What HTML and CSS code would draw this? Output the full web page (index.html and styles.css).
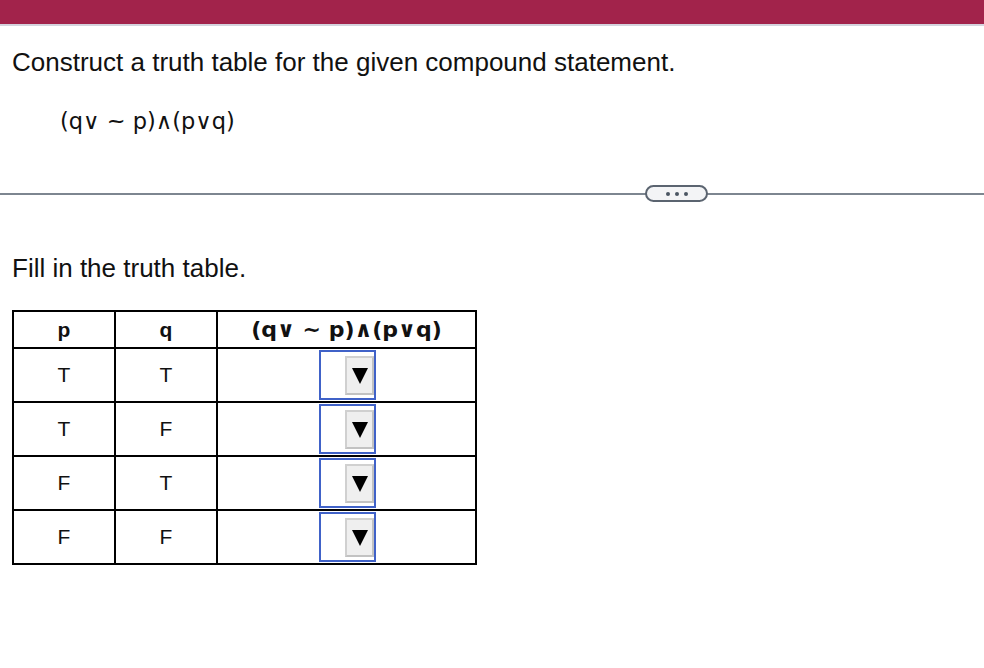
FILE: index.html
```html
<!DOCTYPE html>
<html>
<head>
<meta charset="utf-8">
<link rel="stylesheet" href="styles.css">
</head>
<body>
<div class="topbar"></div>
<div class="question">
  <p class="prompt">Construct a truth table for the given compound statement.</p>
  <p class="formula">(q∨ ~ p)∧(p∨q)</p>
</div>
<div class="divider">
  <span class="pill"><i></i><i></i><i></i></span>
</div>
<div class="answer">
  <p class="fill">Fill in the truth table.</p>
  <table class="truth">
    <tr class="head"><th class="c1">p</th><th class="c2">q</th><th class="c3"><span class="hformula">(q∨ ~ p)∧(p∨q)</span></th></tr>
    <tr><td>T</td><td>T</td><td><span class="dd"><span class="btn"></span></span></td></tr>
    <tr><td>T</td><td>F</td><td><span class="dd"><span class="btn"></span></span></td></tr>
    <tr><td>F</td><td>T</td><td><span class="dd"><span class="btn"></span></span></td></tr>
    <tr><td>F</td><td>F</td><td><span class="dd"><span class="btn"></span></span></td></tr>
  </table>
</div>
</body>
</html>
```

FILE: styles.css
```css
html, body {
  margin: 0;
  padding: 0;
  background: #ffffff;
  font-family: "Liberation Sans", Arial, sans-serif;
  color: #111;
}
.topbar {
  height: 24px;
  background: #a2234b;
  border-bottom: 2px solid #d4d3dd;
}
.question {
  padding: 0 12px;
}
.prompt {
  margin: 21px 0 0 0;
  font-size: 26px;
  line-height: 30px;
}
.formula {
  margin: 29px 0 0 48px;
  font-family: "DejaVu Sans", Verdana, sans-serif;
  font-size: 22.5px;
  line-height: 30px;
}
.divider {
  margin-top: 57px;
  height: 2px;
  background: #7d8690;
  position: relative;
}
.pill {
  position: absolute;
  left: 645px;
  top: -8px;
  width: 59px;
  height: 13px;
  border: 2px solid #5b6470;
  border-radius: 9px;
  background: #f3f4f6;
  display: flex;
  align-items: center;
  justify-content: center;
  gap: 5px;
}
.pill i {
  width: 4px;
  height: 4px;
  border-radius: 50%;
  background: #4b5563;
}
.answer {
  padding: 0 12px;
}
.fill {
  margin: 58px 0 0 0;
  font-size: 26px;
  line-height: 30px;
}
.truth {
  margin-top: 27px;
  border-collapse: collapse;
  border: 2px solid #000;
}
.truth th, .truth td {
  border: 2px solid #000;
  padding: 0;
  text-align: center;
  font-size: 21px;
}
.truth th {
  height: 35px;
  font-weight: bold;
}
.hformula {
  font-family: "DejaVu Sans", Verdana, sans-serif;
  font-size: 22px;
}
.truth td {
  height: 52px;
}
.c1, .c2 { width: 100px; }
.c3 { width: 257px; }
.dd {
  display: inline-flex;
  justify-content: flex-end;
  align-items: center;
  vertical-align: middle;
  width: 57px;
  height: 50px;
  border: 2px solid #4062c8;
  box-sizing: border-box;
  margin-left: 2px;
}
.btn {
  width: 29px;
  height: 39px;
  box-sizing: border-box;
  border: 2px solid #d0d0d0;
  border-right-color: #c2c2c2;
  border-bottom-color: #c2c2c2;
  background: #efefef;
  position: relative;
}
.btn::after {
  content: "";
  position: absolute;
  left: 5px;
  top: 10px;
  border-left: 8px solid transparent;
  border-right: 8px solid transparent;
  border-top: 16px solid #000;
}
```
